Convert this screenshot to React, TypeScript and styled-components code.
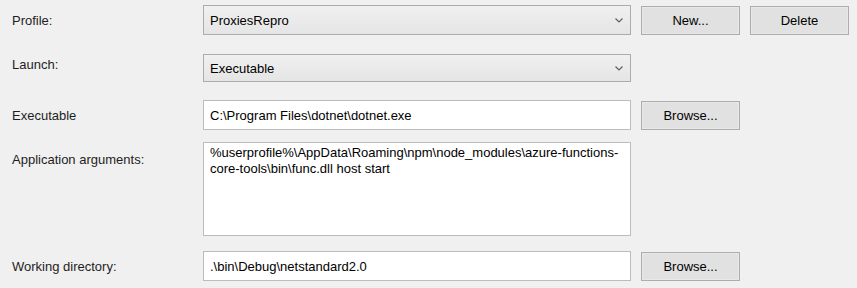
import styled, { createGlobalStyle } from "styled-components";

const GlobalStyle = createGlobalStyle`
  html, body {
    margin: 0;
    padding: 0;
    background: #f0f0f0;
  }
  body {
    font-family: "Liberation Sans", Arial, sans-serif;
    font-size: 13px;
    color: #000000;
  }
`;

interface RowProps {
  $top: number;
  $height: number;
}

const Chevron = () => (
  <svg width="8" height="5" viewBox="0 0 8 5">
    <path d="M0.5 0.5 L4 4 L7.5 0.5" fill="none" stroke="#606060" strokeWidth="1.2" />
  </svg>
);

const App = () => {
  return (
    <>
      <GlobalStyle />
      <SC.Page>
        <SC.Row $top={5} $height={29}>
          <SC.Label $align="center">Profile:</SC.Label>
          <SC.Combo>
            <span>ProxiesRepro</span>
            <Chevron />
          </SC.Combo>
          <SC.Button>New...</SC.Button>
          <SC.Button>Delete</SC.Button>
        </SC.Row>

        <SC.Row $top={20} $height={28}>
          <SC.Label $align="center" $shift={-4}>
            Launch:
          </SC.Label>
          <SC.Combo>
            <span>Executable</span>
            <Chevron />
          </SC.Combo>
        </SC.Row>

        <SC.Row $top={18} $height={28}>
          <SC.Label $align="center">Executable</SC.Label>
          <SC.TextBox>C:\Program Files\dotnet\dotnet.exe</SC.TextBox>
          <SC.Button>Browse...</SC.Button>
        </SC.Row>

        <SC.Row $top={14} $height={94}>
          <SC.Label $align="start" $shift={10}>
            Application arguments:
          </SC.Label>
          <SC.TextArea>
            %userprofile%\AppData\Roaming\npm\node_modules\azure-functions-
            <br />
            core-tools\bin\func.dll host start
          </SC.TextArea>
        </SC.Row>

        <SC.Row $top={15} $height={28}>
          <SC.Label $align="center">Working directory:</SC.Label>
          <SC.TextBox>.\bin\Debug\netstandard2.0</SC.TextBox>
          <SC.Button>Browse...</SC.Button>
        </SC.Row>
      </SC.Page>
    </>
  );
};

export default App;

const SC = {
  Page: styled("div")`
    width: 857px;
    height: 288px;
    padding-left: 12px;
    box-sizing: border-box;
    overflow: hidden;
  `,
  Row: styled("div")<RowProps>`
    display: grid;
    grid-template-columns: 181px 428px 99px 99px;
    column-gap: 10px;
    margin-top: ${({ $top }) => $top}px;
    height: ${({ $height }) => $height}px;
  `,
  Label: styled("div")<{ $align: "center" | "start"; $shift?: number }>`
    align-self: ${({ $align }) => $align};
    position: relative;
    top: ${({ $shift }) => $shift ?? 0}px;
    white-space: nowrap;
    color: #1e1e1e;
  `,
  Combo: styled("div")`
    display: flex;
    align-items: center;
    justify-content: space-between;
    padding: 0 7px 0 6px;
    border: 1px solid #acacac;
    background: linear-gradient(#f0f0f0, #e5e5e5);
    box-sizing: border-box;
    height: 100%;
  `,
  TextBox: styled("div")`
    display: flex;
    align-items: center;
    padding: 0 6px;
    border: 1px solid #bcbcbc;
    background: #ffffff;
    box-sizing: border-box;
    height: 100%;
    white-space: nowrap;
  `,
  TextArea: styled("div")`
    padding: 2px 6px;
    border: 1px solid #bcbcbc;
    background: #ffffff;
    box-sizing: border-box;
    height: 100%;
    line-height: 16px;
    white-space: nowrap;
  `,
  Button: styled("button")`
    font: inherit;
    color: #000000;
    padding: 0;
    margin-top: 1px;
    height: 29px;
    border: 1px solid #adadad;
    box-shadow: inset 0 0 0 1px #e8e8e8;
    background: #e1e1e1;
    border-radius: 0;
  `,
};
